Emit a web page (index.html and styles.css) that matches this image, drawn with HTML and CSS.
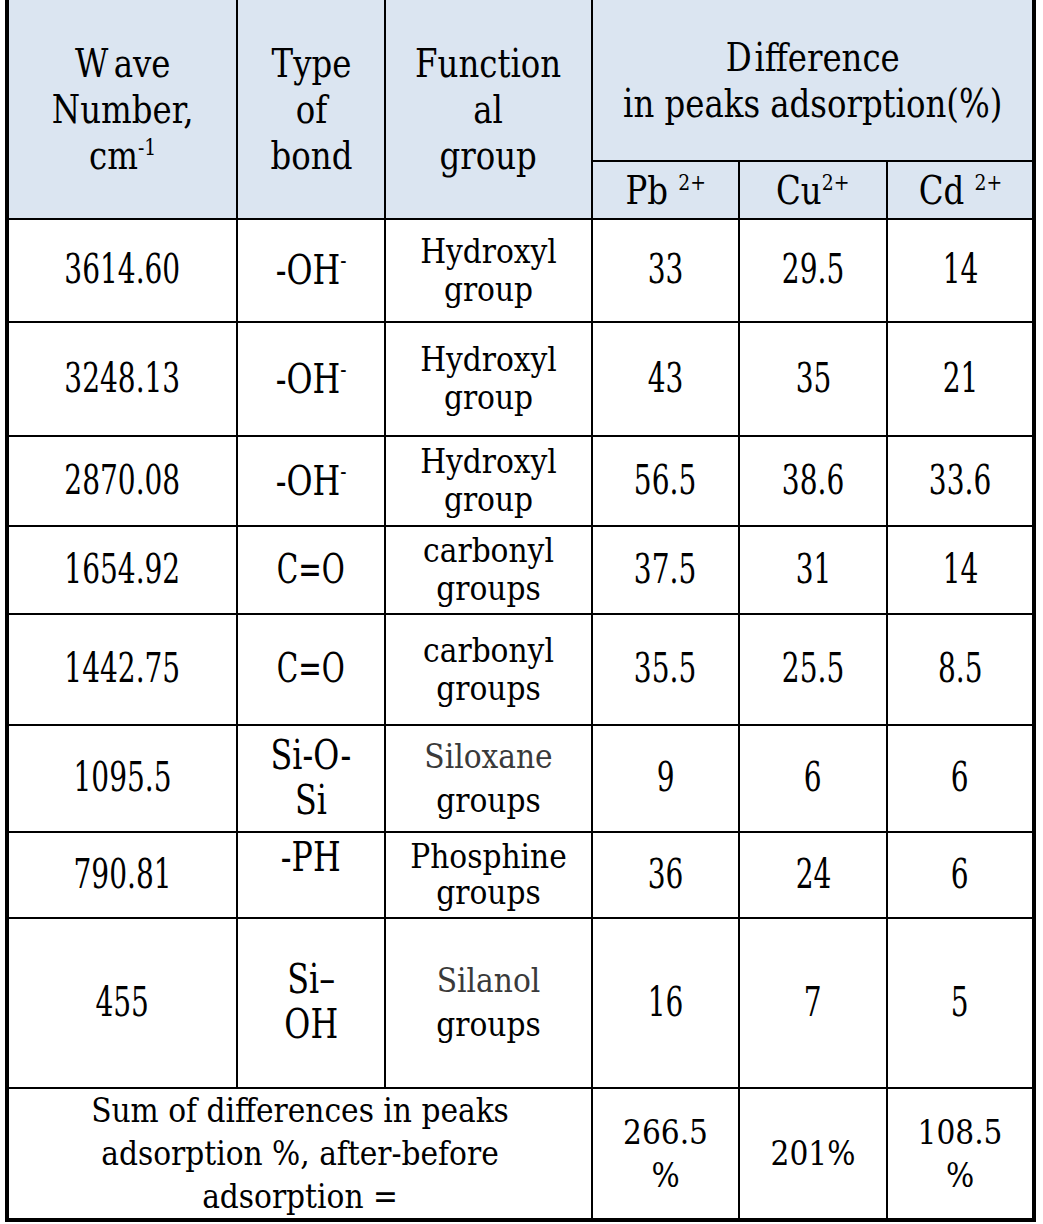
FILE: index.html
```html
<!DOCTYPE html>
<html>
<head>
<meta charset="utf-8">
<link rel="stylesheet" href="styles.css">
</head>
<body>
<table class="tbl">
  <colgroup>
    <col class="c1"><col class="c2"><col class="c3"><col class="c4"><col class="c5"><col class="c6">
  </colgroup>
  <thead>
    <tr class="h1">
      <th rowspan="2"><span class="hx"><span class="gap">W</span>ave<br>Number,<br>cm<sup>-1</sup></span></th>
      <th rowspan="2"><span class="hx">Type<br>of<br>bond</span></th>
      <th rowspan="2"><span class="hx">Function<br>al<br>group</span></th>
      <th colspan="3"><span class="hx"><span class="gap-s">D</span>ifference<br>in peaks adsorption(%)</span></th>
    </tr>
    <tr class="h2">
      <th><span class="hx">Pb <sup>2+</sup></span></th>
      <th><span class="hx">Cu<sup>2+</sup></span></th>
      <th><span class="hx">Cd <sup>2+</sup></span></th>
    </tr>
  </thead>
  <tbody>
    <tr class="r1"><td><span class="n">3614.60</span></td><td><span class="f">-OH<sup>-</sup></span></td><td>Hydroxyl<br>group</td><td><span class="n">33</span></td><td><span class="n">29.5</span></td><td><span class="n">14</span></td></tr>
    <tr class="r2"><td><span class="n">3248.13</span></td><td><span class="f">-OH<sup>-</sup></span></td><td>Hydroxyl<br>group</td><td><span class="n">43</span></td><td><span class="n">35</span></td><td><span class="n">21</span></td></tr>
    <tr class="r3"><td><span class="n">2870.08</span></td><td><span class="f">-OH<sup>-</sup></span></td><td>Hydroxyl<br>group</td><td><span class="n">56.5</span></td><td><span class="n">38.6</span></td><td><span class="n">33.6</span></td></tr>
    <tr class="r4"><td><span class="n">1654.92</span></td><td><span class="n">C=O</span></td><td>carbonyl<br>groups</td><td><span class="n">37.5</span></td><td><span class="n">31</span></td><td><span class="n">14</span></td></tr>
    <tr class="r5"><td><span class="n">1442.75</span></td><td><span class="n">C=O</span></td><td>carbonyl<br>groups</td><td><span class="n">35.5</span></td><td><span class="n">25.5</span></td><td><span class="n">8.5</span></td></tr>
    <tr class="r6"><td><span class="n">1095.5</span></td><td class="loose"><span class="f">Si-O-<br>Si</span></td><td class="loose"><span class="grey">Siloxane</span><br>groups</td><td><span class="n">9</span></td><td><span class="n">6</span></td><td><span class="n">6</span></td></tr>
    <tr class="r7"><td><span class="n">790.81</span></td><td class="top"><span class="f">-PH</span></td><td class="tight">Phosphine<br>groups</td><td><span class="n">36</span></td><td><span class="n">24</span></td><td><span class="n">6</span></td></tr>
    <tr class="r8"><td><span class="n">455</span></td><td class="loose"><span class="f">Si–<br>OH</span></td><td class="loose"><span class="grey">Silanol</span><br>groups</td><td><span class="n">16</span></td><td><span class="n">7</span></td><td><span class="n">5</span></td></tr>
    <tr class="r9"><td colspan="3" class="sum">Sum of differences in peaks<br>adsorption %, after-before<br>adsorption =</td><td class="sum">266.5<br>%</td><td>201%</td><td class="sum">108.5<br>%</td></tr>
  </tbody>
</table>
</body>
</html>
```

FILE: styles.css
```css
html, body {
  margin: 0;
  padding: 0;
  background: #ffffff;
}
body {
  padding-left: 5px;
}
.tbl {
  border-collapse: collapse;
  table-layout: fixed;
  width: 1031px;
  border: 4px solid #000;
  border-top: none;
  font-family: "DejaVu Serif", serif;
  font-stretch: condensed;
  color: #000;
}
.c1 { width: 230px; }
.c2 { width: 148px; }
.c3 { width: 207px; }
.c4 { width: 147px; }
.c5 { width: 148px; }
.c6 { width: 147px; }
.tbl th, .tbl td {
  border: 2px solid #000;
  padding: 0;
  text-align: center;
  vertical-align: middle;
}
.tbl thead tr:first-child th {
  border-top: none;
}
.tbl th {
  background: #dbe5f1;
  font-weight: normal;
  font-size: 40px;
  line-height: 46px;
}
.tbl td {
  font-size: 33px;
  line-height: 38px;
}
.hx {
  display: inline-block;
  transform: scaleX(0.9);
  white-space: nowrap;
}
.gap {
  margin-right: 6px;
}
.gap-s {
  margin-right: 3px;
}
.n {
  display: inline-block;
  font-size: 41px;
  transform: scaleX(0.76);
  white-space: nowrap;
}
.f {
  display: inline-block;
  font-size: 41px;
  line-height: 45px;
  transform: scaleX(0.86);
  white-space: nowrap;
}
sup {
  font-size: 0.58em;
  line-height: 0;
  vertical-align: 0.62em;
}
.h1 { height: 161px; }
.h2 { height: 58px; }
.h2 th { line-height: 40px; }
.r1 { height: 103px; }
.r2 { height: 114px; }
.r3 { height: 90px; }
.r4 { height: 88px; }
.r5 { height: 111px; }
.r6 { height: 107px; }
.r7 { height: 86px; }
.r8 { height: 170px; }
.r9 { height: 132px; }
.tbl td.top {
  vertical-align: top;
  padding-top: 2px;
}
.tbl td.loose {
  line-height: 44px;
}
.tbl td.tight {
  line-height: 36px;
}
.grey {
  color: #3a3a3a;
}
.tbl td.sum {
  line-height: 43px;
}
```
